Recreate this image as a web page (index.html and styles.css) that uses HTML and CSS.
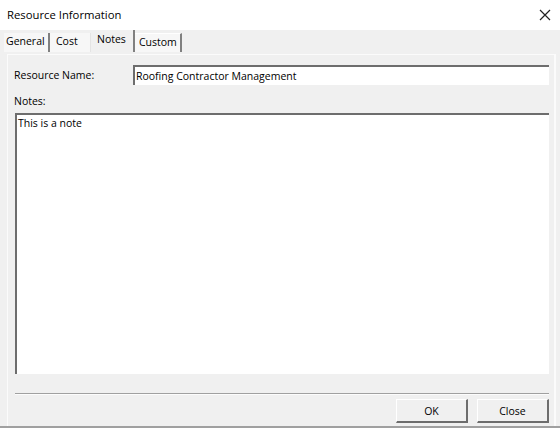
FILE: index.html
```html
<!DOCTYPE html>
<html lang="en">
<head>
<meta charset="UTF-8">
<title>Resource Information</title>
<link rel="stylesheet" href="styles.css">
</head>
<body>
<div class="window">
    <div class="titlebar">
        <span class="title">Resource Information</span>
        <svg class="close-icon" width="12" height="12" viewBox="0 0 12 12">
            <path d="M1 1 L11 11 M11 1 L1 11" stroke="#222" stroke-width="1.2" fill="none"/>
        </svg>
    </div>
    <div class="tabs">
        <div class="tab tab-general">General</div>
        <div class="tab tab-cost">Cost</div>
        <div class="tab tab-active">Notes</div>
        <div class="tab tab-custom">Custom</div>
    </div>
    <div class="page">
        <div class="row">
            <label class="label" for="resName">Resource Name:</label>
            <div class="field">Roofing Contractor Management</div>
        </div>
        <div class="notes-label">Notes:</div>
        <div class="notes">This is a note</div>
        <div class="separator"></div>
        <div class="buttons">
            <button class="btn">OK</button>
            <button class="btn">Close</button>
        </div>
    </div>
</div>
</body>
</html>
```

FILE: styles.css
```css
body {
    margin: 0;
    font-family: "Open Sans", "Liberation Sans", sans-serif;
    font-size: 10.5px;
    color: #000;
    background-color: #f0f0f0;
}
.window {
    width: 560px;
    height: 428px;
    display: flex;
    flex-direction: column;
    background-color: #f0f0f0;
    border-bottom: 2px solid #a0a0a0;
    box-sizing: border-box;
}
.titlebar {
    height: 30px;
    flex: none;
    background-color: #fff;
    display: flex;
    align-items: center;
    justify-content: space-between;
    padding: 0 9px 0 7px;
}
.title {
    font-size: 11.3px;
    color: #000;
    margin-top: -1px;
}
.tabs {
    height: 22px;
    flex: none;
    display: flex;
    align-items: flex-end;
    padding-left: 4px;
    margin-bottom: 2px;
}
.tab {
    height: 19px;
    line-height: 17px;
    background-color: #f7f7f7;
    box-sizing: border-box;
    white-space: nowrap;
}
.tab-general {
    width: 46px;
    padding-left: 2px;
    border-right: 2px solid #808080;
}
.tab-cost {
    width: 41px;
    padding-left: 6px;
    border-right: 1px solid #e4e4e4;
}
.tab-active {
    width: 44px;
    height: 22px;
    line-height: 19px;
    padding-left: 6px;
    background-color: #f0f0f0;
    border-right: 2px solid #808080;
}
.tab-custom {
    width: 47px;
    border-top: 1px solid #ffffff;
    border-right: 2px solid #808080;
    padding-left: 4px;
}
.page {
    flex: 1;
    margin: 0 4px 0 7px;
    border-left: 1px solid #fbfbfb;
    border-right: 2px solid #fbfbfb;
    border-top: 1px solid #fbfbfb;
    display: flex;
    flex-direction: column;
    padding: 10px 5px 0 6px;
}
.row {
    display: flex;
    align-items: center;
    height: 20px;
}
.label {
    width: 119px;
}
.field {
    flex: 1;
    height: 20px;
    line-height: 18px;
    background-color: #fff;
    border-top: 2px solid #6d6d6d;
    border-left: 2px solid #6d6d6d;
    padding-left: 1px;
    box-sizing: border-box;
}
.notes-label {
    margin-top: 8px;
    height: 20px;
    line-height: 16px;
}
.notes {
    height: 261px;
    background-color: #fff;
    border-top: 2px solid #6d6d6d;
    border-left: 2px solid #6d6d6d;
    padding: 1px 0 0 1px;
    margin-left: 1px;
    box-sizing: border-box;
    line-height: 15px;
}
.separator {
    margin-top: 19px;
    height: 0;
    border-top: 1px solid #a0a0a0;
    border-bottom: 1px solid #fcfcfc;
    margin-left: 1px;
}
.buttons {
    display: flex;
    justify-content: flex-end;
    gap: 9px;
    margin-top: 4px;
}
.btn {
    width: 72px;
    height: 24px;
    font-family: "Open Sans", "Liberation Sans", sans-serif;
    font-size: 10.5px;
    color: #000;
    background-color: #f0f0f0;
    border-top: 1px solid #fff;
    border-left: 1px solid #fff;
    border-right: 2px solid #6d6d6d;
    border-bottom: 2px solid #6d6d6d;
    padding: 0;
}
```
